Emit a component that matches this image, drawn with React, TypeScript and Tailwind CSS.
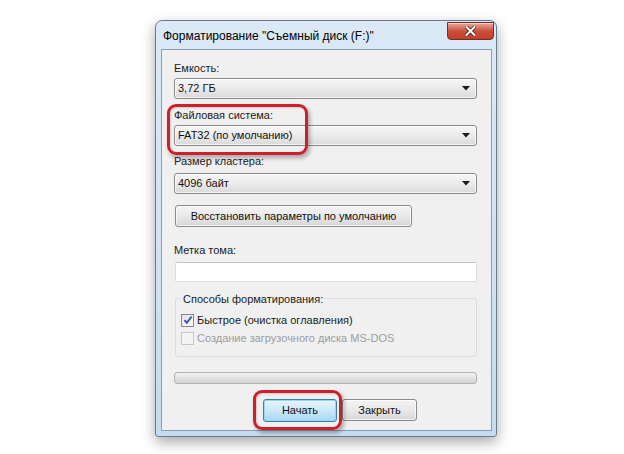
const font = "font-['Liberation_Sans','Arial',sans-serif]";

function Arrow() {
  return (
    <svg width="8" height="5" viewBox="0 0 8 5" className="shrink-0">
      <path d="M0 0h8L4 4.5z" fill="#1a1a1a" />
    </svg>
  );
}

function Combo({ value }: { value: string }) {
  return (
    <div className="h-[21px] w-full rounded-[3px] border border-[#8a8a8a] bg-gradient-to-b from-[#f6f6f6] via-[#ebebeb] to-[#d9d9d9] flex items-center justify-between pl-[3px] pr-[6px] shadow-[inset_0_0_0_1px_rgba(255,255,255,0.7)]">
      <span className="text-[11px] leading-none text-[#111] whitespace-nowrap">{value}</span>
      <Arrow />
    </div>
  );
}

function Label({ text, className = "" }: { text: string; className?: string }) {
  return <div className={`text-[11px] leading-[16px] text-[#1b1b1b] whitespace-nowrap ${className}`}>{text}</div>;
}

function CheckRow({ checked, disabled, text }: { checked?: boolean; disabled?: boolean; text: string }) {
  return (
    <div className="flex items-center gap-[3px] h-[18px]">
      <div
        className={`w-[13px] h-[13px] border flex items-center justify-center ${
          disabled
            ? "border-[#c8c8c8] bg-[#f4f4f4]"
            : "border-[#8a8a8a] bg-gradient-to-br from-[#e4e4e4] to-[#fbfbfb]"
        }`}
      >
        {checked && (
          <svg width="10" height="10" viewBox="0 0 10 10">
            <path d="M1.5 5.2l2.3 2.6L8.6 1.6" fill="none" stroke="#3b5ba5" strokeWidth="2" />
          </svg>
        )}
      </div>
      <span className={`text-[11px] leading-none whitespace-nowrap ${disabled ? "text-[#9d9d9d]" : "text-[#1b1b1b]"}`}>
        {text}
      </span>
    </div>
  );
}

function Highlight({ className }: { className: string }) {
  return (
    <div
      className={`absolute rounded-[9px] border-[3px] border-[#cf1f2b] shadow-[2px_3px_4px_rgba(0,0,0,0.3),inset_1px_1px_2px_rgba(0,0,0,0.15)] pointer-events-none ${className}`}
    />
  );
}

export default function App() {
  return (
    <div className={`w-[624px] h-[454px] bg-white pl-[155px] pt-[20px] ${font}`}>
      {/* Window */}
      <div className="w-[342px] h-[417px] rounded-t-[7px] rounded-b-[3px] border border-[#6b7a8b] bg-gradient-to-b from-[#dbe9f7] via-[#d2e3f4] to-[#c6dbf0] shadow-[0_5px_14px_rgba(0,0,0,0.35)] pl-[5px] pr-[4px] pb-[5px] flex flex-col">
        {/* Title bar */}
        <div className="h-[28px] flex items-start justify-between">
          <span className="mt-[7px] pl-[2px] text-[12px] leading-[16px] text-black whitespace-nowrap">
            Форматирование "Съемный диск (F:)"
          </span>
          <div className="mt-[1px] -mr-[2px] w-[47px] h-[18px] rounded-b-[4px] border border-[#7a2a1f] bg-gradient-to-b from-[#e9a99b] via-[#c9503c] to-[#c23e2b] flex items-center justify-center shadow-[inset_0_1px_0_rgba(255,255,255,0.5)]">
            <svg width="11" height="10" viewBox="0 0 11 10">
              <path d="M1.5 1l8 8M9.5 1l-8 8" stroke="#3a1510" strokeWidth="3.4" strokeLinecap="square" />
              <path d="M1.5 1l8 8M9.5 1l-8 8" stroke="#fff" strokeWidth="2" strokeLinecap="square" />
            </svg>
          </div>
        </div>

        {/* Client area */}
        <div className="relative flex-1 border border-[#8a9db3] bg-[#f0f0f0] pl-[12px] pr-[14px] pt-[10px] flex flex-col">
          <Label text="Емкость:" />
          <div className="mt-[2px]">
            <Combo value="3,72 ГБ" />
          </div>

          <Label text="Файловая система:" className="mt-[8px]" />
          <div className="mt-[2px]">
            <Combo value="FAT32 (по умолчанию)" />
          </div>

          <Label text="Размер кластера:" className="mt-[7px]" />
          <div className="mt-[4px]">
            <Combo value="4096 байт" />
          </div>

          <div className="mt-[11px] ml-[1px] w-[237px] h-[22px] rounded-[3px] border border-[#8a8a8a] bg-gradient-to-b from-[#f4f4f4] via-[#e9e9e9] to-[#d6d6d6] flex items-center justify-center shadow-[inset_0_0_0_1px_rgba(255,255,255,0.7)]">
            <span className="text-[11px] leading-none text-[#111] whitespace-nowrap">Восстановить параметры по умолчанию</span>
          </div>

          <Label text="Метка тома:" className="mt-[15px]" />
          <div className="mt-[4px] ml-[1px] h-[20px] rounded-[2px] border border-[#dcdcdc] border-t-[#c6c6c6] bg-white" />

          {/* Group box */}
          <div className="mt-[16px] ml-[1px] h-[59px] rounded-[3px] border border-[#d5dfe5] px-[5px] flex flex-col">
            <span className="-mt-[8px] self-start bg-[#f0f0f0] px-[2px] text-[11px] leading-[16px] text-[#1b1b1b] whitespace-nowrap">
              Способы форматирования:
            </span>
            <div className="mt-[4px] flex flex-col">
              <CheckRow checked text="Быстрое (очистка оглавления)" />
              <CheckRow disabled text="Создание загрузочного диска MS-DOS" />
            </div>
          </div>

          {/* Progress bar */}
          <div className="mt-[15px] h-[12px] rounded-[3px] border border-[#b2b2b2] bg-gradient-to-b from-[#f3f3f3] via-[#e2e2e2] to-[#d4d4d4]" />

          {/* Buttons */}
          <div className="mt-[15px] ml-[89px] flex gap-[5px]">
            <div className="w-[74px] h-[23px] rounded-[3px] border border-[#3c7fb1] bg-gradient-to-b from-[#eaf6fd] via-[#c9e8f8] to-[#a7d8f2] flex items-center justify-center shadow-[inset_0_0_0_1px_#9cd6f2]">
              <span className="text-[11px] leading-none text-[#111]">Начать</span>
            </div>
            <div className="w-[75px] h-[22px] rounded-[3px] border border-[#8a8a8a] bg-gradient-to-b from-[#f4f4f4] via-[#e9e9e9] to-[#d6d6d6] flex items-center justify-center shadow-[inset_0_0_0_1px_rgba(255,255,255,0.7)]">
              <span className="text-[11px] leading-none text-[#111]">Закрыть</span>
            </div>
          </div>

          <Highlight className="left-[5px] top-[54px] w-[141px] h-[51px]" />
          <Highlight className="left-[91px] top-[340px] w-[89px] h-[40px]" />
        </div>
      </div>
    </div>
  );
}
